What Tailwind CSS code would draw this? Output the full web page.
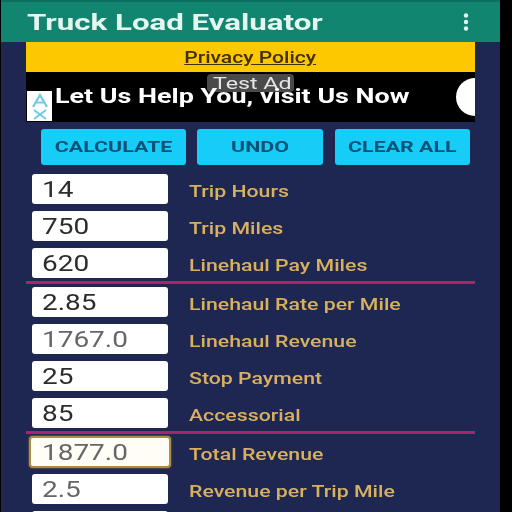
<!DOCTYPE html>
<html>
<head>
<meta charset="utf-8">
<script src="https://cdn.jsdelivr.net/npm/@tailwindcss/browser@4"></script>
</head>
<body class="bg-black">
<div class="w-[512px] h-[512px] overflow-hidden bg-black font-['Roboto',sans-serif]">
  <div class="ml-px w-[499px] h-[512px] bg-[#1e2752] overflow-hidden blur-[0.5px]">
    <header class="h-[42px] bg-[#11856f] border-t-2 border-[#0c6f60] flex items-center justify-between pl-[26px] pr-[31px]">
      <span class="inline-block origin-left scale-x-[1.42] text-[22px] font-bold text-[#e4f6f0]">Truck Load Evaluator</span>
      <svg width="6" height="18" viewBox="0 0 6 18" class="fill-[#e4f6f0]"><circle cx="3" cy="2.5" r="2.2"/><circle cx="3" cy="9" r="2.2"/><circle cx="3" cy="15.5" r="2.2"/></svg>
    </header>
    <div class="ml-[25px] w-[449px]">
      <div class="h-[30px] pt-[2px] bg-[#fdc800] flex items-center justify-center text-[17px] font-medium text-[#3f3000] underline"><span class="inline-block scale-x-[1.24]">Privacy Policy</span></div>
      <div class="relative h-[50px] bg-black overflow-hidden">
        <span class="absolute left-[181px] top-[2px] w-[87px] h-[18px] pl-[6px] bg-[#4a4a4a] rounded-sm text-[16px] leading-[19px] text-[#e6e6e6]"><span class="inline-block origin-left scale-x-[1.45]">Test Ad</span></span>
        <span class="absolute left-[29px] top-[12px] origin-left scale-x-[1.345] text-[20px] leading-[24px] font-bold text-white whitespace-nowrap">Let Us Help You, visit Us Now</span>
        <div class="absolute left-[1px] top-[19px] w-[25px] h-[30px] bg-white flex flex-col items-center justify-center gap-[1px]">
          <svg width="20" height="15" viewBox="0 0 20 15" fill="none" stroke="#6fcbe2" stroke-width="2.2"><path d="M3 14 10 2l7 12M5.5 9.5h9"/></svg>
          <svg width="16" height="11" viewBox="0 0 16 11" fill="none" stroke="#6fcbe2" stroke-width="2"><path d="m2 1 12 9M14 1 2 10"/></svg>
        </div>
        <div class="absolute left-[430px] top-[6px] w-[38px] h-[38px] rounded-full bg-white"></div>
      </div>
      <div class="h-[42px] pt-[7px] flex text-[15.5px] font-bold text-[#085278]">
        <button class="ml-[15px] w-[145px] h-[36px] pt-[2px] bg-[#16cdf7] rounded-[3px]"><span class="inline-block scale-x-[1.38]">CALCULATE</span></button>
        <button class="ml-[11px] w-[126px] h-[36px] pt-[2px] bg-[#16cdf7] rounded-[3px]"><span class="inline-block scale-x-[1.38]">UNDO</span></button>
        <button class="ml-[12px] w-[135px] h-[36px] pt-[2px] bg-[#16cdf7] rounded-[3px]"><span class="inline-block scale-x-[1.38]">CLEAR ALL</span></button>
      </div>
    </div>
    <div class="ml-[25px] w-[449px] mt-[10px] flex flex-col text-[16.5px] font-medium text-[#d8b060]">
      <div class="h-[37px] flex items-start"><div class="ml-[6px] w-[136px] h-[30px] bg-white rounded-[3px] pl-[10px] text-[22px] leading-[31px] font-normal text-[#2c2c2c]"><span class="inline-block origin-left scale-x-[1.27]">14</span></div><span class="ml-[21px] leading-[35px] origin-left scale-x-[1.29]">Trip Hours</span></div>
      <div class="h-[37px] flex items-start"><div class="ml-[6px] w-[136px] h-[30px] bg-white rounded-[3px] pl-[10px] text-[22px] leading-[31px] font-normal text-[#2c2c2c]"><span class="inline-block origin-left scale-x-[1.27]">750</span></div><span class="ml-[21px] leading-[35px] origin-left scale-x-[1.29]">Trip Miles</span></div>
      <div class="h-[33px] flex items-start"><div class="ml-[6px] w-[136px] h-[30px] bg-white rounded-[3px] pl-[10px] text-[22px] leading-[31px] font-normal text-[#2c2c2c]"><span class="inline-block origin-left scale-x-[1.27]">620</span></div><span class="ml-[21px] leading-[35px] origin-left scale-x-[1.29]">Linehaul Pay Miles</span></div>
      <div class="h-[3px] bg-[#a8246c] mb-[3px]"></div>
      <div class="h-[37px] flex items-start"><div class="ml-[6px] w-[136px] h-[30px] bg-white rounded-[3px] pl-[10px] text-[22px] leading-[31px] font-normal text-[#2c2c2c]"><span class="inline-block origin-left scale-x-[1.27]">2.85</span></div><span class="ml-[21px] leading-[35px] origin-left scale-x-[1.29]">Linehaul Rate per Mile</span></div>
      <div class="h-[37px] flex items-start"><div class="ml-[6px] w-[136px] h-[30px] bg-white rounded-[3px] pl-[10px] text-[22px] leading-[31px] font-normal text-[#666]"><span class="inline-block origin-left scale-x-[1.27]">1767.0</span></div><span class="ml-[21px] leading-[35px] origin-left scale-x-[1.29]">Linehaul Revenue</span></div>
      <div class="h-[37px] flex items-start"><div class="ml-[6px] w-[136px] h-[30px] bg-white rounded-[3px] pl-[10px] text-[22px] leading-[31px] font-normal text-[#2c2c2c]"><span class="inline-block origin-left scale-x-[1.27]">25</span></div><span class="ml-[21px] leading-[35px] origin-left scale-x-[1.29]">Stop Payment</span></div>
      <div class="h-[33px] flex items-start"><div class="ml-[6px] w-[136px] h-[30px] bg-white rounded-[3px] pl-[10px] text-[22px] leading-[31px] font-normal text-[#2c2c2c]"><span class="inline-block origin-left scale-x-[1.27]">85</span></div><span class="ml-[21px] leading-[35px] origin-left scale-x-[1.29]">Accessorial</span></div>
      <div class="h-[3px] bg-[#a8246c] mb-[3px]"></div>
      <div class="h-[37px] flex items-start"><div class="ml-[3px] w-[142px] h-[32px] -mt-[1px] bg-[#fffdf6] border-2 border-[#b08d45] shadow-[0_0_2px_#b08d45] rounded-[4px] pl-[11px] text-[22px] leading-[30px] font-normal text-[#666]"><span class="inline-block origin-left scale-x-[1.27]">1877.0</span></div><span class="ml-[18px] leading-[35px] origin-left scale-x-[1.29]">Total Revenue</span></div>
      <div class="h-[37px] flex items-start"><div class="ml-[6px] w-[136px] h-[30px] bg-white rounded-[3px] pl-[10px] text-[22px] leading-[31px] font-normal text-[#666]"><span class="inline-block origin-left scale-x-[1.27]">2.5</span></div><span class="ml-[21px] leading-[35px] origin-left scale-x-[1.29]">Revenue per Trip Mile</span></div>
      <div class="h-[37px] flex items-start"><div class="ml-[6px] w-[136px] h-[30px] bg-white rounded-[3px]"></div></div>
    </div>
  </div>
</div>
</body>
</html>
